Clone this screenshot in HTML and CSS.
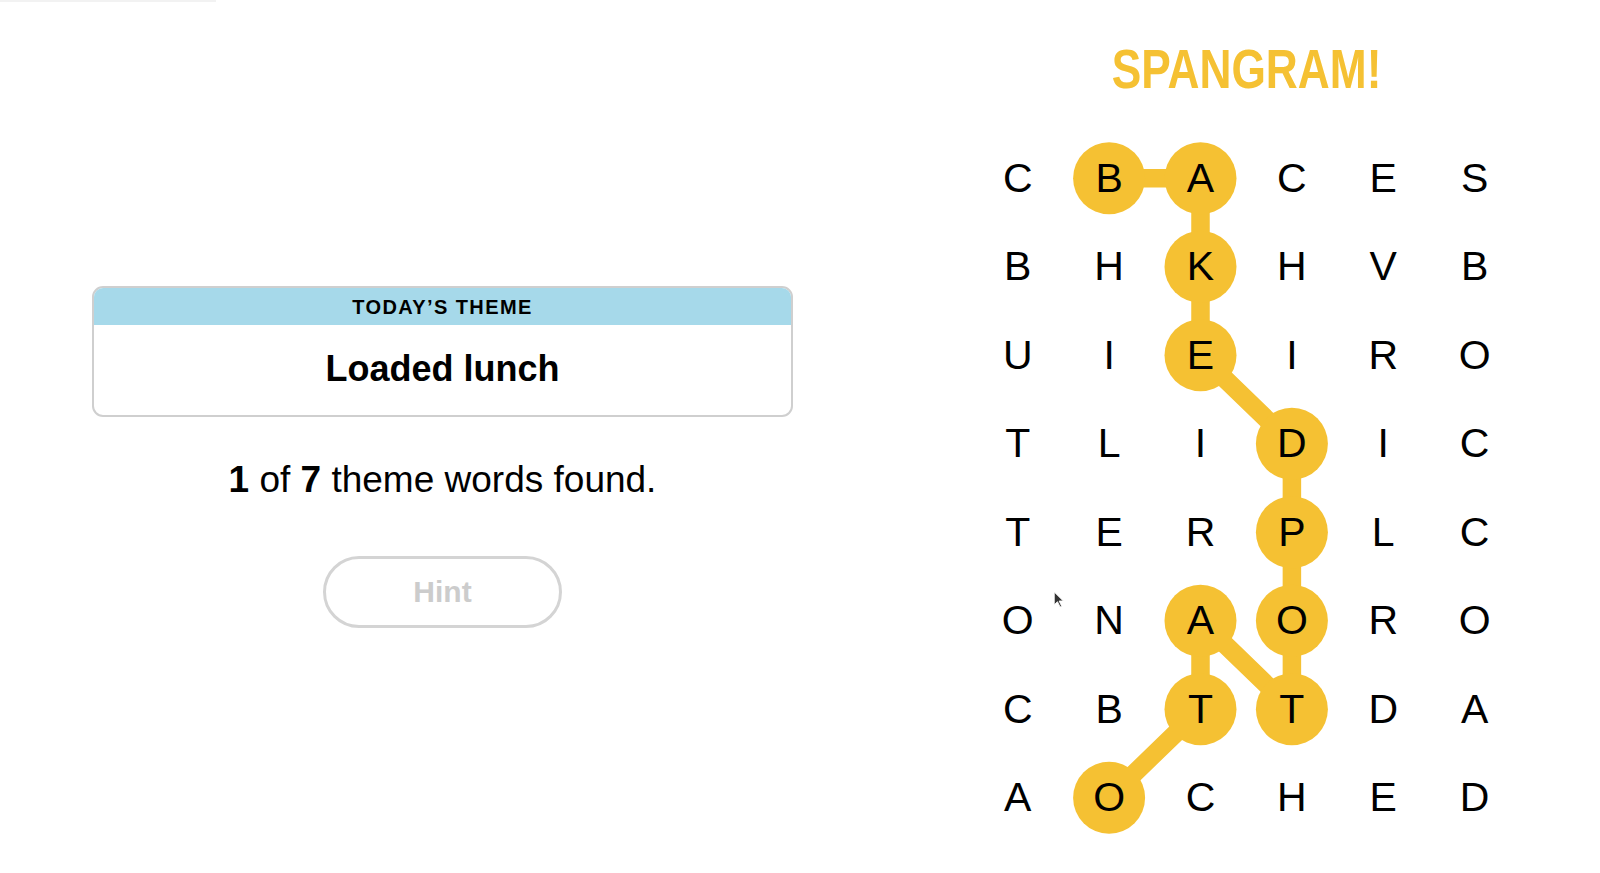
FILE: index.html
```html
<!DOCTYPE html>
<html lang="en">
<head>
<meta charset="utf-8">
<title>Strands</title>
<link rel="stylesheet" href="styles.css">
</head>
<body>
<div class="topline"></div>
<main class="page">
  <section class="left">
    <div class="theme-card">
      <div class="theme-head">TODAY’S THEME</div>
      <div class="theme-body">Loaded lunch</div>
    </div>
    <p class="progress"><b>1</b> of <b>7</b> theme words found.</p>
    <button class="hint">Hint</button>
  </section>
  <section class="right">
    <h1 class="spangram">SPANGRAM!</h1>
    <div class="board">
      <svg class="paths" width="548.4" height="708" viewBox="0 0 548.4 708">
        <polyline points="137.1,44.25 228.5,44.25 228.5,132.75 228.5,221.25 319.9,309.75 319.9,398.25 319.9,486.75 319.9,575.25 228.5,486.75 228.5,575.25 137.1,663.75" fill="none" stroke="#f5c133" stroke-width="18.5" stroke-linejoin="round"/>
        <g fill="#f5c133">
          <circle cx="137.1" cy="44.25" r="36"/>
          <circle cx="228.5" cy="44.25" r="36"/>
          <circle cx="228.5" cy="132.75" r="36"/>
          <circle cx="228.5" cy="221.25" r="36"/>
          <circle cx="319.9" cy="309.75" r="36"/>
          <circle cx="319.9" cy="398.25" r="36"/>
          <circle cx="319.9" cy="486.75" r="36"/>
          <circle cx="319.9" cy="575.25" r="36"/>
          <circle cx="228.5" cy="486.75" r="36"/>
          <circle cx="228.5" cy="575.25" r="36"/>
          <circle cx="137.1" cy="663.75" r="36"/>
        </g>
      </svg>
      <div class="letters">
        <span>C</span><span>B</span><span>A</span><span>C</span><span>E</span><span>S</span>
        <span>B</span><span>H</span><span>K</span><span>H</span><span>V</span><span>B</span>
        <span>U</span><span>I</span><span>E</span><span>I</span><span>R</span><span>O</span>
        <span>T</span><span>L</span><span>I</span><span>D</span><span>I</span><span>C</span>
        <span>T</span><span>E</span><span>R</span><span>P</span><span>L</span><span>C</span>
        <span>O</span><span>N</span><span>A</span><span>O</span><span>R</span><span>O</span>
        <span>C</span><span>B</span><span>T</span><span>T</span><span>D</span><span>A</span>
        <span>A</span><span>O</span><span>C</span><span>H</span><span>E</span><span>D</span>
      </div>
      <svg class="cursor" width="11" height="17" viewBox="0 0 10 16">
        <path d="M1 1 L1 13 L4 10 L6.5 15 L8 14.3 L5.6 9.4 L9.5 9.4 Z" fill="#333" stroke="#fff" stroke-width="0.8"/>
      </svg>
    </div>
  </section>
</main>
</body>
</html>
```
FILE: styles.css
```css
* { box-sizing: border-box; }
html, body { margin: 0; padding: 0; background: #fff; }
body {
  width: 1600px;
  height: 873px;
  overflow: hidden;
  font-family: "Liberation Sans", Arial, sans-serif;
  color: #000;
}
.topline {
  width: 216px;
  height: 2px;
  background: #f2f2f2;
}
.page {
  display: flex;
  align-items: flex-start;
}
.left {
  width: 701px;
  margin-left: 92px;
  padding-top: 284px;
  display: flex;
  flex-direction: column;
  align-items: center;
}
.theme-card {
  width: 701px;
  height: 131px;
  border: 2px solid #cfcfcf;
  border-radius: 11px;
  overflow: hidden;
  display: flex;
  flex-direction: column;
}
.theme-head {
  height: 39px;
  margin: -2px -2px 0;
  background: #a6d9ea;
  display: flex;
  align-items: center;
  justify-content: center;
  font-size: 20px;
  font-weight: 700;
  letter-spacing: 1.4px;
  padding-top: 3px;
}
.theme-body {
  flex: 1;
  display: flex;
  align-items: center;
  justify-content: center;
  font-size: 36px;
  font-weight: 700;
  padding-bottom: 3px;
}
.progress {
  margin: 41px 0 0;
  font-size: 37px;
  line-height: 44px;
  height: 44px;
}
.progress b { font-weight: 700; }
.hint {
  margin-top: 54px;
  width: 239px;
  height: 72px;
  border: 3px solid #d4d4d4;
  border-radius: 36px;
  background: #fff;
  color: #cccccc;
  font-family: "Liberation Sans", Arial, sans-serif;
  font-size: 30px;
  font-weight: 700;
  padding: 0;
}
.right {
  margin-left: 179px;
  width: 548.4px;
  display: flex;
  flex-direction: column;
  align-items: center;
}
.spangram {
  margin: 37px 0 0;
  height: 60px;
  line-height: 60px;
  font-family: "Liberation Sans", Arial, sans-serif;
  font-size: 55px;
  font-weight: 700;
  color: #f5c133;
  white-space: nowrap;
  transform: scaleX(0.805);
  transform-origin: 50% 50%;
}
.board {
  position: relative;
  margin-top: 35px;
  width: 548.4px;
  height: 708px;
}
.paths {
  position: absolute;
  left: 0;
  top: 0;
}
.letters {
  position: relative;
  display: grid;
  grid-template-columns: repeat(6, 91.4px);
  grid-template-rows: repeat(8, 88.5px);
}
.letters span {
  display: flex;
  align-items: center;
  justify-content: center;
  font-size: 41px;
  line-height: 1;
}
.cursor {
  position: absolute;
  left: 81px;
  top: 457px;
}
```
